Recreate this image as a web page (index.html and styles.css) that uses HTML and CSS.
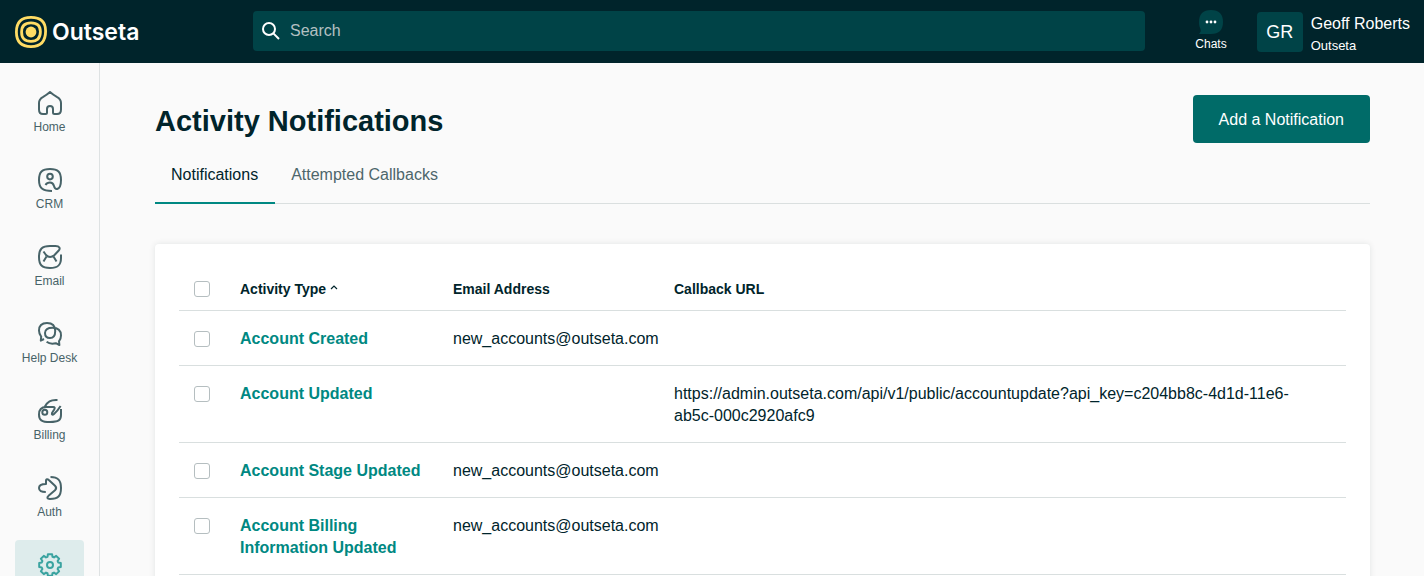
FILE: index.html
```html
<!DOCTYPE html>
<html lang="en">
<head>
    <meta charset="UTF-8">
    <meta name="viewport" content="width=device-width, initial-scale=1.0">
    <title>Activity Notifications</title>
    <link rel="stylesheet" href="styles.css">
</head>
<body>
    <header class="topbar">
        <a class="brand" href="#">
            <svg class="brand-logo" viewBox="0 0 32 32">
                <path d="M16 1.4C26 1.4 30.6 6 30.6 15C30.6 25 26 30.6 16 30.6C6 30.6 1.4 26 1.4 16C1.4 6 6 1.4 16 1.4Z"/>
                <path d="M16 6.8C22.6 6.8 25.4 9.6 25.4 15.6C25.4 22.2 22.4 25.4 16 25.4C9.6 25.4 6.6 22.4 6.6 16C6.6 9.6 9.6 6.8 16 6.8Z"/>
                <circle cx="16" cy="16" r="5.4"/>
            </svg>
            <span>Outseta</span>
        </a>
        <label class="search">
            <svg class="search-icon" viewBox="0 0 18 18">
                <circle cx="7" cy="7" r="6"/>
                <path d="M11.4 11.4L17 17"/>
            </svg>
            <input type="text" placeholder="Search" aria-label="Search">
        </label>
        <a class="chats" href="#">
            <svg class="chats-icon" viewBox="0 0 24 24">
                <path d="M12 0C20 0 24 4 24 12S20 24 12 24H0C1.5 22.5 2 21 1.5 19C.5 17 0 15 0 12C0 4 4 0 12 0Z"/>
                <circle cx="8" cy="12" r="1.4"/>
                <circle cx="12" cy="12" r="1.4"/>
                <circle cx="16" cy="12" r="1.4"/>
            </svg>
            <span>Chats</span>
        </a>
        <a class="profile" href="#">
            <span class="avatar">GR</span>
            <span class="profile-text">
                <span class="profile-name">Geoff Roberts</span>
                <span class="profile-company">Outseta</span>
            </span>
        </a>
    </header>

    <div class="layout">
        <nav class="sidebar">
            <a class="nav-item" href="#">
                <svg class="nav-icon" viewBox="0 0 24 24">
                    <path d="M12 1C10 2.8 7.5 4.6 4.8 6.2C2.3 7.6 1 9.4 1 12V18.5C1 21.5 2.5 23 5 23H7.5C8.5 23 9 22.5 9 21.5V18C9 14 15 14 15 18V21.5C15 22.5 15.5 23 16.5 23H19C21.5 23 23 21.5 23 18.5V12C23 9.4 21.7 7.6 19.2 6.2C16.5 4.6 14 2.8 12 1Z"/>
                </svg>
                <span>Home</span>
            </a>
            <a class="nav-item" href="#">
                <svg class="nav-icon" viewBox="0 0 24 24">
                    <circle cx="12" cy="8.6" r="2.8"/>
                    <path d="M7.5 17C8.5 15.4 10 14.6 12 14.6C14.4 14.6 15.4 16 16 18C16.6 20.2 17.6 21.4 19.2 21C21.8 20.2 23 17 23 12C23 4 20 1 12 1S1 4 1 12S4.5 23 14 23"/>
                </svg>
                <span>CRM</span>
            </a>
            <a class="nav-item" href="#">
                <svg class="nav-icon" viewBox="0 0 24 24">
                    <path d="M23 9.5V13C23 20 20 23 12 23S1 20 1 12S4 1 12 1H17.5C21.5 1 22.8 3.2 20.5 5.8L16.5 10C13.5 12.8 10.5 12.8 8 10L5.5 6.5"/>
                    <path d="M8.5 11.5L5.5 16.5M15.5 11.5L18.5 16.5"/>
                </svg>
                <span>Email</span>
            </a>
            <a class="nav-item" href="#">
                <svg class="nav-icon" viewBox="0 0 24 24">
                    <path d="M6 17L2.8 18.6L3.2 14.6C1.6 12.6 1 11 1 8.6C1 3.2 3.6 1 9 1C14.6 1 17.2 3.6 17.2 9C17.2 13.6 15.6 16 12 16C8.8 16 7 14 7 11C7 7.4 9.8 5.8 14.4 5.8C20.4 5.8 23 8.4 23 13.6C23 16 22.4 17.8 21 19.2L21.4 23L17.8 21.2C14.4 22 11 21.6 8.6 19.8"/>
                </svg>
                <span>Help Desk</span>
            </a>
            <a class="nav-item" href="#">
                <svg class="nav-icon" viewBox="0 0 24 24">
                    <circle cx="6.8" cy="13.2" r="2.5"/>
                    <path d="M19.5 1C12.5 .8 9.5 2.6 6.6 8"/>
                    <path d="M23 10V16C23 21 20.5 23 12 23S1 21 1 15.5C1 10.2 3 8 8 8H15C17 8 17 9 16.2 10.4L14 14C13.4 15.8 14.6 16.2 16 15C18.6 12.8 20.6 10.2 22.6 7"/>
                </svg>
                <span>Billing</span>
            </a>
            <a class="nav-item" href="#">
                <svg class="nav-icon" viewBox="0 0 24 24">
                    <path d="M7.8 16C3.4 16 1 14.8 1 12S3.4 8 8 8V4.6C8 3 9.4 2.6 10.8 4L17 9.8C18.6 11.4 18.6 12.6 17 14.2L10.8 19.4C8.4 21.4 9 23 12 23C20 23 23 20 23 12C23 4.4 20 1 12.5 1"/>
                </svg>
                <span>Auth</span>
            </a>
            <a class="nav-item active" href="#" aria-label="Settings">
                <svg class="nav-icon" viewBox="0 0 24 24">
                    <circle cx="12" cy="12" r="3"/>
                    <path d="M9.9 1.2H14.1L14.5 3.8L16 4.4L18.2 2.9L21.1 5.8L19.6 8L20.2 9.5L22.8 9.9V14.1L20.2 14.5L19.6 16L21.1 18.2L18.2 21.1L16 19.6L14.5 20.2L14.1 22.8H9.9L9.5 20.2L8 19.6L5.8 21.1L2.9 18.2L4.4 16L3.8 14.5L1.2 14.1V9.9L3.8 9.5L4.4 8L2.9 5.8L5.8 2.9L8 4.4L9.5 3.8Z"/>
                </svg>
            </a>
        </nav>

        <main class="content">
            <div class="page-header">
                <h1>Activity Notifications</h1>
                <button class="btn-primary" type="button">Add a Notification</button>
            </div>

            <div class="tabs">
                <a class="tab active" href="#">Notifications</a>
                <a class="tab" href="#">Attempted Callbacks</a>
            </div>

            <div class="card">
                <table class="data-table">
                    <colgroup>
                        <col class="col-check">
                        <col class="col-type">
                        <col class="col-email">
                        <col>
                    </colgroup>
                    <thead>
                        <tr>
                            <th class="check"><input type="checkbox" aria-label="Select all"></th>
                            <th>Activity Type
                                <svg class="sort-icon" viewBox="0 0 8 5"><path d="M1 4L4 1L7 4"/></svg>
                            </th>
                            <th>Email Address</th>
                            <th>Callback URL</th>
                        </tr>
                    </thead>
                    <tbody>
                        <tr>
                            <td class="check"><input type="checkbox" aria-label="Account Created"></td>
                            <td><a href="#">Account Created</a></td>
                            <td>new_accounts@outseta.com</td>
                            <td></td>
                        </tr>
                        <tr>
                            <td class="check"><input type="checkbox" aria-label="Account Updated"></td>
                            <td><a href="#">Account Updated</a></td>
                            <td></td>
                            <td>https://admin.outseta.com/api/v1/public/accountupdate?api_key=c204bb8c-4d1d-11e6-ab5c-000c2920afc9</td>
                        </tr>
                        <tr>
                            <td class="check"><input type="checkbox" aria-label="Account Stage Updated"></td>
                            <td><a href="#">Account Stage Updated</a></td>
                            <td>new_accounts@outseta.com</td>
                            <td></td>
                        </tr>
                        <tr>
                            <td class="check"><input type="checkbox" aria-label="Account Billing Information Updated"></td>
                            <td><a href="#">Account Billing Information Updated</a></td>
                            <td>new_accounts@outseta.com</td>
                            <td></td>
                        </tr>
                    </tbody>
                </table>
            </div>
        </main>
    </div>
</body>
</html>
```
FILE: styles.css
```css
/* General Styles */
* {
    box-sizing: border-box;
}

body {
    margin: 0;
    height: 100vh;
    display: flex;
    flex-direction: column;
    overflow: hidden;
    font-family: "Liberation Sans", Arial, sans-serif;
    font-size: 16px;
    line-height: 22px;
    color: #00242b;
    background: #fafafa;
}

a {
    color: inherit;
    text-decoration: none;
}

svg {
    display: block;
    flex: none;
}

/* Top Bar */
.topbar {
    flex: none;
    display: flex;
    align-items: center;
    height: 63px;
    padding: 0 14px 1px 15px;
    background: #00242b;
    color: #fff;
}

.brand {
    display: flex;
    align-items: center;
    gap: 5px;
    width: 238px;
    padding-top: 2px;
    font-family: Inter, "Liberation Sans", sans-serif;
    font-size: 23px;
    font-weight: 600;
}

.brand-logo {
    width: 32px;
    height: 32px;
    fill: none;
    stroke: #ffdc64;
    stroke-width: 2.8;
}

.brand-logo circle {
    fill: #ffdc64;
    stroke: none;
}

.search {
    flex: 1;
    display: flex;
    align-items: center;
    gap: 10px;
    height: 40px;
    padding: 0 9px;
    border-radius: 4px;
    background: #004347;
}

.search-icon {
    width: 18px;
    height: 18px;
    fill: none;
    stroke: #fff;
    stroke-width: 2;
}

.search input {
    flex: 1;
    padding: 0;
    border: 0;
    outline: 0;
    background: none;
    font: inherit;
    color: #fff;
}

.search input::placeholder {
    color: #b3c0c2;
    opacity: 1;
}

.chats {
    display: flex;
    flex-direction: column;
    align-items: center;
    gap: 2px;
    margin: 0 30px 0 50px;
    font-size: 12px;
    line-height: 16px;
}

.chats-icon {
    width: 24px;
    height: 24px;
    fill: #004347;
}

.chats-icon circle {
    fill: #fff;
}

.profile {
    display: flex;
    align-items: center;
    gap: 8px;
    padding-top: 2px;
}

.avatar {
    width: 46px;
    border-radius: 4px;
    background: #004347;
    font-size: 18px;
    line-height: 40px;
    text-align: center;
}

.profile-text {
    display: flex;
    flex-direction: column;
    padding-top: 5px;
}

.profile-company {
    font-size: 13px;
}

/* Sidebar */
.layout {
    flex: 1;
    display: flex;
    min-height: 0;
}

.sidebar {
    flex: none;
    display: flex;
    flex-direction: column;
    gap: 8px;
    width: 100px;
    padding: 15px;
    border-right: 1px solid #dee2e3;
    overflow: hidden;
}

.nav-item {
    flex: none;
    display: flex;
    flex-direction: column;
    align-items: center;
    gap: 4px;
    height: 69px;
    padding-top: 13px;
    border-radius: 4px;
    font-size: 12px;
    line-height: 16px;
    white-space: nowrap;
    color: #476368;
}

.nav-item.active {
    background: #deecec;
    color: #3aa3a0;
}

.nav-icon {
    width: 24px;
    height: 24px;
    fill: none;
    stroke: currentColor;
    stroke-width: 2;
    stroke-linejoin: round;
}

/* Content */
.content {
    flex: 1;
    min-width: 0;
    padding: 32px 54px 32px 55px;
    overflow-y: auto;
    scrollbar-width: none;
}

.page-header {
    display: flex;
    align-items: center;
    justify-content: space-between;
}

h1 {
    margin: 0;
    padding-top: 3px;
    font-size: 29px;
    line-height: 40px;
}

.btn-primary {
    height: 48px;
    padding: 2px 26px 0;
    border: 0;
    border-radius: 4px;
    background: #006b68;
    font: inherit;
    color: #fff;
}

/* Tabs */
.tabs {
    display: flex;
    margin-top: 3px;
    border-bottom: 1px solid #dadfdf;
}

.tab {
    margin-bottom: -1px;
    padding: 17px 17px 15px 16px;
    border-bottom: 2px solid transparent;
    line-height: 24px;
    color: #4d666b;
}

.tab.active {
    border-bottom-color: #008882;
    color: #00242b;
}

/* Table */
.card {
    margin-top: 40px;
    padding: 24px;
    border-radius: 4px;
    background: #fff;
    box-shadow: 0 0 6px rgba(0, 36, 43, 0.1);
}

.data-table {
    width: 100%;
    table-layout: fixed;
    border-spacing: 0;
}

.col-check {
    width: 45px;
}

.col-type {
    width: 213px;
}

.col-email {
    width: 221px;
}

th,
td {
    padding: 17px 0 15px 16px;
    border-bottom: 1px solid #d9dfdf;
    text-align: left;
    vertical-align: top;
}

th {
    padding-top: 10px;
    padding-bottom: 10px;
    font-size: 14px;
}

th:last-child,
td:last-child {
    padding-right: 24px;
}

.check {
    padding-left: 15px;
}

.check input {
    appearance: none;
    display: block;
    width: 16px;
    height: 16px;
    margin: 3px 0 0;
    border: 1px solid #b5bec0;
    border-radius: 3px;
    background: #fff;
}

td a {
    font-weight: bold;
    color: #008882;
}

.sort-icon {
    display: inline-block;
    width: 8px;
    height: 5px;
    vertical-align: 4px;
    fill: none;
    stroke: #00242b;
    stroke-width: 1.2;
}
```
